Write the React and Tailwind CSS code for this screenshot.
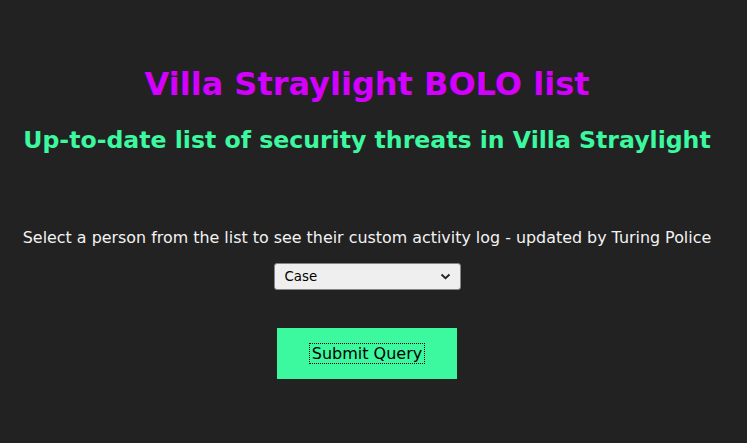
export default function App() {
  return (
    <div className="w-[747px] h-[443px] bg-[#222222]">
      <div className="w-[734px] flex flex-col items-center text-center" style={{ fontFamily: '"DejaVu Sans", sans-serif' }}>
        <h1 className="mt-[66px] text-[32px] leading-[37px] font-bold text-[#d400ff] whitespace-nowrap">Villa Straylight BOLO list</h1>
        <h2 className="mt-[23px] text-[23.6px] leading-[28px] font-bold text-[#3cf9a0] whitespace-nowrap">Up-to-date list of security threats in Villa Straylight</h2>
        <p className="mt-[74px] text-[15.9px] leading-[19px] text-[#f2f2f2] whitespace-nowrap">Select a person from the list to see their custom activity log - updated by Turing Police</p>
        <div className="mt-[16px] w-[187px] h-[27px] bg-[#efefef] border border-[#858585] rounded-[3px] flex items-center justify-between pl-[10px] pr-[9px] text-[13.33px] text-black text-left">
          <span>Case</span>
          <svg width="11" height="7" viewBox="0 0 11 7" fill="none">
            <path d="M1.5 1.5 L5.5 5.2 L9.5 1.5" stroke="#222" strokeWidth="1.8" />
          </svg>
        </div>
        <div className="mt-[38px] w-[180px] h-[51px] bg-[#3cf9a0] flex items-center justify-center">
          <span className="text-[16px] leading-[19px] text-black outline outline-1 outline-dotted outline-black px-[2px]">Submit Query</span>
        </div>
      </div>
    </div>
  );
}
